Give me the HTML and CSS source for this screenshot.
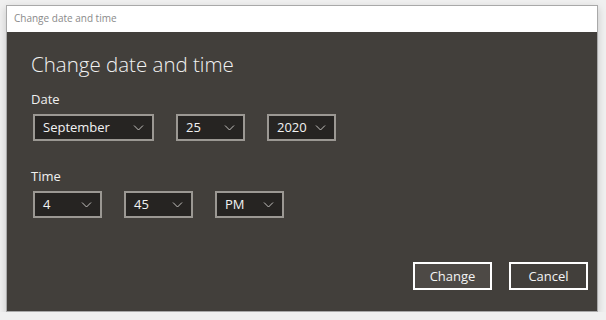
FILE: index.html
```html
<!DOCTYPE html>
<html lang="en">
<head>
    <meta charset="UTF-8">
    <title>Change date and time</title>
    <link rel="stylesheet" href="styles.css">
</head>
<body>

    <div class="window">
        <div class="titlebar">Change date and time</div>

        <div class="content">
            <h1>Change date and time</h1>

            <div class="label">Date</div>
            <div class="row">
                <div class="select wide">September
                    <svg class="chev" width="11" height="7" viewBox="0 0 11 7"><path d="M1 1.5 L5.5 6 L10 1.5" /></svg>
                </div>
                <div class="select">25
                    <svg class="chev" width="11" height="7" viewBox="0 0 11 7"><path d="M1 1.5 L5.5 6 L10 1.5" /></svg>
                </div>
                <div class="select">2020
                    <svg class="chev" width="11" height="7" viewBox="0 0 11 7"><path d="M1 1.5 L5.5 6 L10 1.5" /></svg>
                </div>
            </div>

            <div class="label time">Time</div>
            <div class="row">
                <div class="select">4
                    <svg class="chev" width="11" height="7" viewBox="0 0 11 7"><path d="M1 1.5 L5.5 6 L10 1.5" /></svg>
                </div>
                <div class="select">45
                    <svg class="chev" width="11" height="7" viewBox="0 0 11 7"><path d="M1 1.5 L5.5 6 L10 1.5" /></svg>
                </div>
                <div class="select">PM
                    <svg class="chev" width="11" height="7" viewBox="0 0 11 7"><path d="M1 1.5 L5.5 6 L10 1.5" /></svg>
                </div>
            </div>

            <div class="buttons">
                <button class="btn primary">Change</button>
                <button class="btn">Cancel</button>
            </div>
        </div>
    </div>

</body>
</html>
```

FILE: styles.css
```css
body {
    font-family: "Open Sans", "Noto Sans", sans-serif;
    margin: 0;
    padding: 5px 8px 0 6px;
    background-color: #f0f0f0;
}

.window {
    width: 590px;
    height: 305px;
    border: 1px solid #a9a9a9;
    background-color: #423f3b;
    box-shadow: 0 3px 8px rgba(0, 0, 0, 0.18);
    display: flex;
    flex-direction: column;
}

.titlebar {
    height: 26px;
    line-height: 25px;
    background-color: #ffffff;
    color: #8a8a8a;
    font-size: 10px;
    padding-left: 7px;
}

.content {
    flex: 1;
    display: flex;
    flex-direction: column;
    padding: 0 9px 0 24px;
}

h1 {
    font-weight: 300;
    font-size: 20.5px;
    color: #f2f2f2;
    margin: 18px 0 0 0;
    line-height: 28px;
}

.label {
    font-size: 13px;
    color: #f0f0f0;
    margin-top: 12px;
    line-height: 18px;
}

.label.time {
    margin-top: 26px;
}

.row {
    display: flex;
    gap: 22px;
    margin: 6px 0 0 2px;
}

.select {
    width: 57px;
    height: 23px;
    border: 2px solid #9b9893;
    background-color: #262422;
    color: #f2f2f2;
    font-size: 13px;
    line-height: 23px;
    padding-left: 8px;
    display: flex;
    justify-content: space-between;
    align-items: center;
}

.select.wide {
    width: 109px;
}

.chev {
    fill: none;
    stroke: #c3c1be;
    stroke-width: 1;
    margin-right: 8px;
}

.buttons {
    margin-top: auto;
    margin-bottom: 21px;
    display: flex;
    justify-content: flex-end;
    gap: 17px;
}

.btn {
    width: 79px;
    height: 28px;
    border: 2px solid #ffffff;
    background-color: #423f3b;
    color: #f4f4f4;
    font-family: "Open Sans", "Noto Sans", sans-serif;
    font-size: 13px;
    padding: 0;
}

.btn.primary {
    background-color: #4d4945;
}
```
